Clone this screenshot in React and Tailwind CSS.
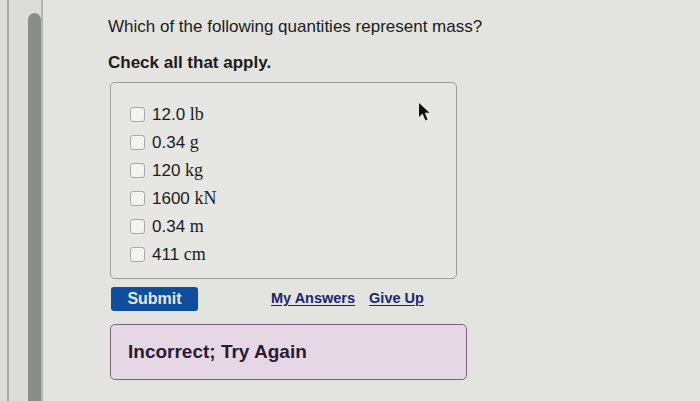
import React from "react";

const sans = { fontFamily: '"Liberation Sans", Arial, sans-serif' };

const options = [
  { num: "12.0", unit: "lb" },
  { num: "0.34", unit: "g" },
  { num: "120", unit: "kg" },
  { num: "1600", unit: "kN" },
  { num: "0.34", unit: "m" },
  { num: "411", unit: "cm" },
];

const Cursor = () => (
  <svg width="13" height="21" viewBox="0 0 13 21" className="absolute left-[307px] top-[19px]">
    <path d="M1 1 L1 15 L4.5 11.5 L7.5 18.5 L9.5 17.5 L6.8 10.8 L11.5 10.8 Z" fill="#111" />
  </svg>
);

export default function App() {
  return (
    <div
      className="w-[700px] h-[401px] bg-[#e3e3df] flex overflow-hidden text-[#1c1c1c]"
      style={sans}
    >
      {/* left rail */}
      <div className="flex shrink-0 bg-[#dcdcd8]">
        <div className="w-[7px]" />
        <div className="w-[2px] bg-[#a9aaa6]" />
        <div className="w-[19px]" />
        <div className="w-[13px] mt-[13px] rounded-t-full bg-[#8b8d88]" />
        <div className="w-[2px] bg-[#b5b6b2]" />
      </div>

      <div className="pl-[65px] pt-[16px] flex flex-col">
        <p className="text-[17px] leading-[22px]">Which of the following quantities represent mass?</p>
        <p className="mt-[15px] text-[17px] leading-[20px] font-bold">Check all that apply.</p>

        {/* choices */}
        <div className="relative mt-[9px] ml-[2px] w-[347px] h-[197px] border border-[#9c9c9a] rounded-[5px] bg-[#e6e6e3] pt-[17px] pl-[19px]">
          {options.map((o, i) => (
            <div key={i} className="h-[28px] flex items-center gap-[7px]">
              <span className="w-[15px] h-[15px] rounded-[3px] border border-[#a8a8a6] bg-[#f3f3f1]" />
              <span className="text-[17px]">
                {o.num}{" "}
                <span className="text-[18px]" style={{ fontFamily: '"Liberation Serif", "Times New Roman", serif' }}>
                  {o.unit}
                </span>
              </span>
            </div>
          ))}
          <Cursor />
        </div>

        {/* actions */}
        <div className="mt-[8px] ml-[3px] flex items-center">
          <button className="w-[87px] h-[24px] rounded-[3px] bg-[#0f4d9f] text-[#e4eaf3] font-bold text-[16px]">
            Submit
          </button>
          <a className="ml-[73px] text-[14.5px] font-bold text-[#1b2870] underline underline-offset-2">My Answers</a>
          <a className="ml-[14px] text-[14.5px] font-bold text-[#1b2870] underline underline-offset-2">Give Up</a>
        </div>

        {/* feedback */}
        <div className="mt-[13px] ml-[2px] w-[357px] h-[56px] rounded-[5px] border border-[#7b6282] bg-[#e6d7e5] flex items-center pl-[17px]">
          <span className="text-[19px] font-bold text-[#2a1b33]">Incorrect; Try Again</span>
        </div>
      </div>
    </div>
  );
}
